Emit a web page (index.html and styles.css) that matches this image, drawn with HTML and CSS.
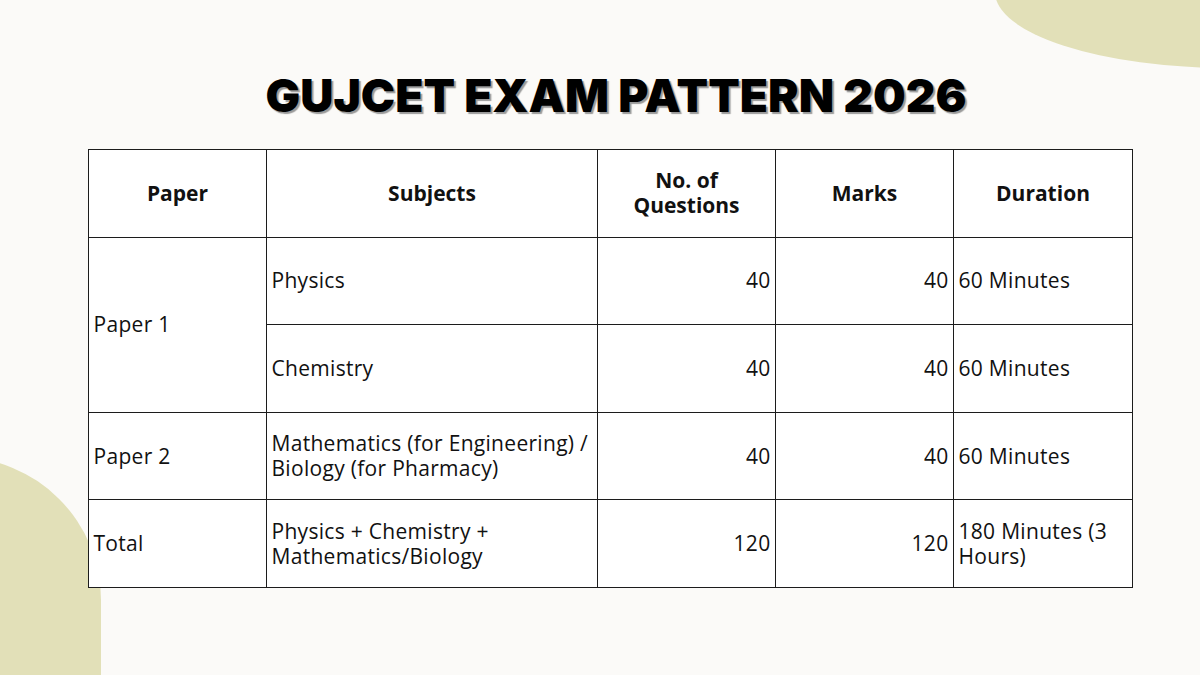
FILE: index.html
```html
<!DOCTYPE html>
<html>
<head>
<meta charset="utf-8">
<link rel="stylesheet" href="styles.css">
</head>
<body>
<div class="blob blob-top"></div>
<div class="blob blob-left"></div>
<main class="page">
  <h1 class="title">GUJCET EXAM PATTERN 2026</h1>
  <table class="pattern">
    <colgroup>
      <col class="c1"><col class="c2"><col class="c3"><col class="c4"><col class="c5">
    </colgroup>
    <thead>
      <tr>
        <th>Paper</th>
        <th>Subjects</th>
        <th>No. of<br>Questions</th>
        <th>Marks</th>
        <th>Duration</th>
      </tr>
    </thead>
    <tbody>
      <tr>
        <td rowspan="2">Paper 1</td>
        <td>Physics</td>
        <td class="num">40</td>
        <td class="num">40</td>
        <td>60 Minutes</td>
      </tr>
      <tr>
        <td>Chemistry</td>
        <td class="num">40</td>
        <td class="num">40</td>
        <td>60 Minutes</td>
      </tr>
      <tr>
        <td>Paper 2</td>
        <td>Mathematics (for Engineering) / Biology (for Pharmacy)</td>
        <td class="num">40</td>
        <td class="num">40</td>
        <td>60 Minutes</td>
      </tr>
      <tr>
        <td>Total</td>
        <td>Physics + Chemistry + Mathematics/Biology</td>
        <td class="num">120</td>
        <td class="num">120</td>
        <td>180 Minutes (3 Hours)</td>
      </tr>
    </tbody>
  </table>
</main>
</body>
</html>
```
FILE: styles.css
```css
html, body {
  margin: 0;
  padding: 0;
}
body {
  width: 1200px;
  height: 675px;
  background: #fbfaf8;
  position: relative;
  overflow: hidden;
  font-family: "Open Sans", "Noto Sans", sans-serif;
  color: #111;
}
.blob {
  position: absolute;
  background: #e2e0b8;
}
.blob-top {
  left: 995px;
  top: -84px;
  width: 470px;
  height: 152px;
  border-radius: 50%;
}
.blob-left {
  left: -185px;
  top: 457px;
  width: 286px;
  height: 500px;
  border-radius: 143px;
}
.page {
  position: relative;
  display: flex;
  flex-direction: column;
  align-items: center;
  padding-top: 66px;
}
.title {
  margin: 0 0 0 32px;
  font-family: "Inter", "Liberation Sans", sans-serif;
  font-weight: 900;
  font-size: 46px;
  line-height: 58px;
  color: #000;
  text-shadow: 2px 2px 1px #9a9a9a;
}
.pattern {
  margin-top: 25px;
  margin-left: 20px;
  border-collapse: collapse;
  background: #fff;
  font-size: 21px;
  line-height: 25px;
  table-layout: fixed;
  width: 1045px;
}
.c1 { width: 178px; }
.c2 { width: 331px; }
.c3 { width: 178px; }
.c4 { width: 178px; }
.c5 { width: 179px; }
.pattern th, .pattern td {
  border: 1.5px solid #1c1c1c;
  height: 87.6px;
  padding: 0 4px 0 5px;
  box-sizing: border-box;
  vertical-align: middle;
}
.pattern th {
  font-weight: 700;
  text-align: center;
}
.pattern td {
  font-weight: 400;
  text-align: left;
  letter-spacing: 0.3px;
}
.pattern td.num {
  text-align: right;
}
```
